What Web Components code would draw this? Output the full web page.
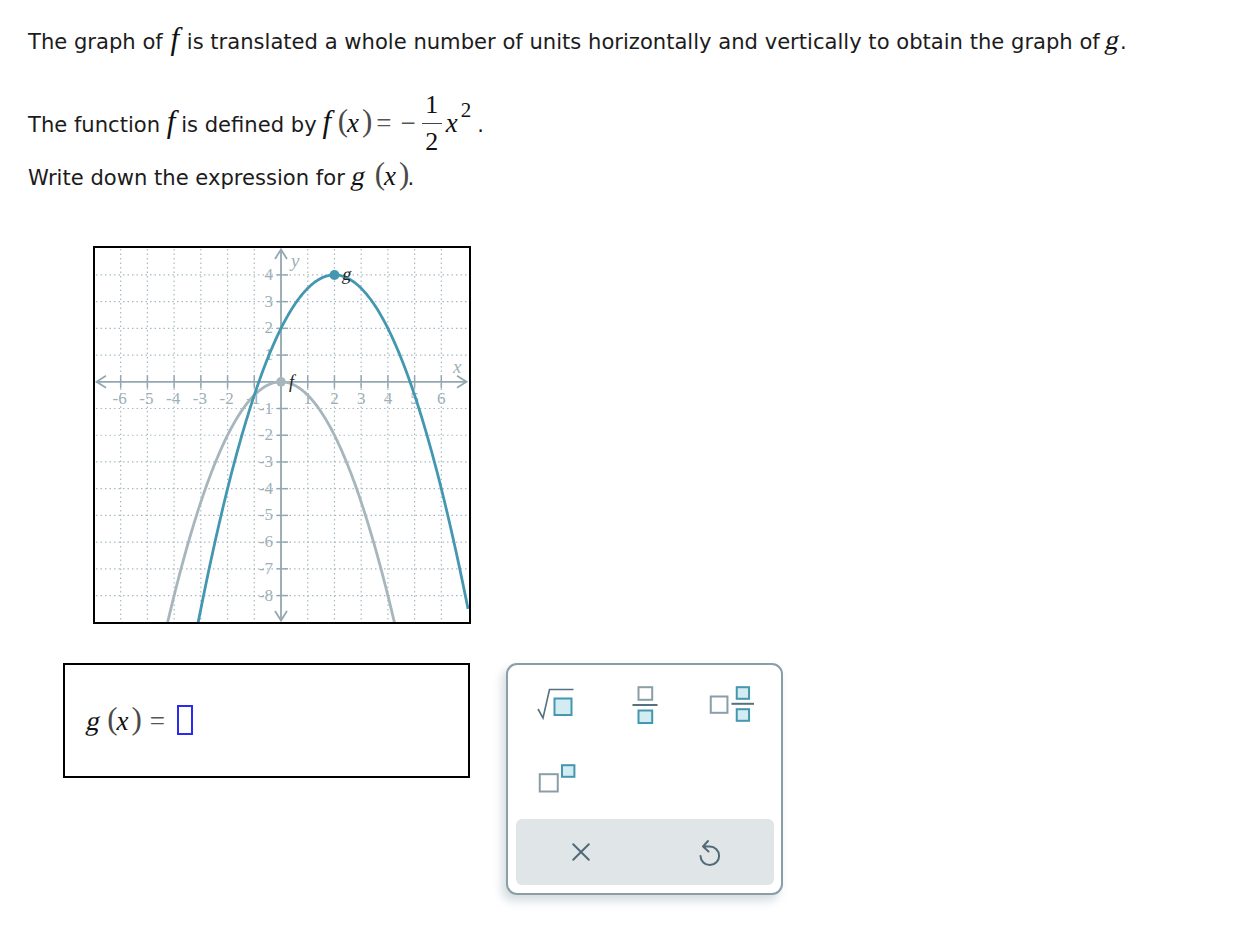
<!DOCTYPE html>
<html lang="en">
<head>
<meta charset="utf-8">
<title>Translated parabola</title>
<style>
  html, body { margin: 0; background: #fff; }
  body { font-family: "DejaVu Sans", Verdana, sans-serif; }
</style>
</head>
<body>

<template id="question-tpl">
  <style>
    :host { display: block; padding: 28px 0 0 28px; font: 21.1px/28px "DejaVu Sans", Verdana, sans-serif; color: #1c1c1c; }
    div { height: 28px; white-space: nowrap; }
    .line2 { margin-top: 54px; }
    .line3 { margin-top: 26px; }
  </style>
  <div class="line1"><slot name="first"></slot></div>
  <div class="line2"><slot name="second"></slot></div>
  <div class="line3"><slot name="third"></slot></div>
</template>

<!-- no whitespace after the style in the inline ones, it would show up as a space -->
<template id="var-tpl"><style>
    :host { font: italic 27px/0 "Liberation Serif", "Times New Roman", serif; color: #111; }
    :host([tall]) { font-size: 31px; margin: 0 1px; }
    /* the italic g of this font is single storey, the reference has the two storey one */
    :host([two-storey]) { display: inline-block; font-style: normal; transform: skewX(-12deg); }
  </style><slot></slot></template>

<template id="op-tpl"><style>
    :host { font: 27px/0 "Liberation Serif", "Times New Roman", serif; color: #555; }
  </style><slot></slot></template>

<template id="paren-tpl"><style>
    :host { margin-left: 3px; font: 27px/0 "Liberation Serif", "Times New Roman", serif; color: #111; }
    span { font-size: 31px; color: #4a4a4a; position: relative; top: -1px; }
    i { font-style: italic; margin: 0 3px 0 -1px; }
  </style><span>(</span><i><slot></slot></i><span>)</span></template>

<template id="frac-tpl">
  <style>
    :host { display: inline-flex; flex-direction: column; align-items: center; width: 20px; margin: -30px 0 -30px 6px; vertical-align: 19px; font: 26px/26px "Liberation Serif", "Times New Roman", serif; color: #111; }
    .n { padding-bottom: 4.8px; }
    .d { padding-top: 5px; border-top: 1px solid #444; width: 100%; text-align: center; }
  </style>
  <div class="n"><slot name="num"></slot></div>
  <div class="d"><slot name="den"></slot></div>
</template>

<template id="graph-tpl">
  <style>
    :host { display: block; width: 378px; height: 378px; margin: 54px 0 0 93px; box-sizing: border-box; border: 2px solid #000; background: #fff; }
    svg { display: block; }
    text { font-family: "Liberation Serif", "Times New Roman", serif; font-size: 17px; fill: #9db0b8; }
    .name { font-style: italic; font-size: 19px; }
    .curve-name { font-style: italic; fill: #222; font-size: 18px; }
  </style>
  <svg id="plot" width="374" height="374" viewBox="0 0 374 374"></svg>
</template>

<template id="answer-tpl"><style>
    :host { display: block; box-sizing: border-box; width: 407px; height: 115px; border: 2px solid #000; padding-left: 21.7px; font: 27px/113px "Liberation Serif", "Times New Roman", serif; color: #222; white-space: nowrap; }
    .eq { margin-left: 8px; color: #555; }
    .cursor { display: inline-block; vertical-align: -5.4px; margin-left: 11.5px; width: 16.5px; height: 30px; border: 2px solid #2b2bf0; box-sizing: border-box; }
  </style><slot></slot><span class="eq">=</span><span class="cursor"></span></template>

<template id="palette-tpl">
  <style>
    :host { display: block; box-sizing: border-box; width: 277px; height: 232px; border: 2px solid #8a9ea8; border-radius: 11px; background: #fff; box-shadow: -4px 6px 10px rgba(120,145,160,.32); padding: 1px 6px 0 4px; }
    .keys { display: grid; grid-template-columns: repeat(3, 88.5px); grid-auto-rows: 75px; height: 150px; }
    .bar { display: flex; margin: 3px 0 0 4px; width: 258px; height: 66px; background: #e0e5e8; border-radius: 6px; }
    .bar ::slotted(*) { flex: 1; }
  </style>
  <div class="keys"><slot></slot></div>
  <div class="bar"><slot name="actions"></slot></div>
</template>

<template id="key-tpl">
  <style>
    :host { display: flex; align-items: center; justify-content: center; }
    svg { display: block; overflow: visible; }
    .o { fill: #fff; stroke: #8a9ea8; stroke-width: 2; }
    .s { fill: #d3ecf2; stroke: #4497b0; stroke-width: 2; }
    .l { fill: none; stroke: #56717e; stroke-width: 2; }
    .t { fill: none; stroke: #56717e; stroke-width: 1.6; }
    .a { fill: none; stroke: #4f6b78; stroke-width: 2; stroke-linecap: round; stroke-linejoin: round; }
  </style>
  <svg id="icon" width="48" height="48" viewBox="0 0 48 48"></svg>
</template>

<question-text>
  <span slot="first">The graph of <math-var tall>f</math-var> is translated a whole number of units horizontally and vertically to obtain the graph of <math-var two-storey>g</math-var>.</span>
  <span slot="second">The function <math-var tall style="margin:0 -1px 0 0">f</math-var> is defined by <math-var tall style="margin:0 1px 0 -1px">f</math-var> <math-paren style="margin-left:-1px">x</math-paren><math-op style="margin-left:4px">=</math-op><math-op style="margin-left:9px">−</math-op><math-frac><span slot="num">1</span><span slot="den">2</span></math-frac><math-var style="margin-left:4px">x</math-var><math-op style="margin-left:3px;font-size:21px;vertical-align:15px;color:#111">2</math-op><span style="margin-left:6px">.</span></span>
  <span slot="third">Write down the expression for <math-var two-storey>g</math-var> <math-paren>x</math-paren><span style="margin-left:-2px">.</span></span>
</question-text>

<axis-graph></axis-graph>

<div style="display:flex;gap:36px;margin:39px 0 0 63px;padding-bottom:40px;align-items:flex-start">
  <answer-box><math-var two-storey>g</math-var><math-paren style="margin-left:7px">x</math-paren></answer-box>
  <math-palette>
    <palette-key icon="sqrt"></palette-key>
    <palette-key icon="frac"></palette-key>
    <palette-key icon="mixed"></palette-key>
    <palette-key icon="power"></palette-key>
    <palette-key slot="actions" icon="clear"></palette-key>
    <palette-key slot="actions" icon="undo"></palette-key>
  </math-palette>
</div>

<script>
  // same little boilerplate for every element: clone the template into an open root
  function tplClass(id) {
    return class extends HTMLElement {
      constructor() {
        super();
        this.attachShadow({mode: 'open'}).appendChild(document.getElementById(id).content.cloneNode(true));
      }
    };
  }

  customElements.define('question-text', tplClass('question-tpl'));
  customElements.define('math-var', tplClass('var-tpl'));
  customElements.define('math-op', tplClass('op-tpl'));
  customElements.define('math-paren', tplClass('paren-tpl'));
  customElements.define('math-frac', tplClass('frac-tpl'));
  customElements.define('answer-box', tplClass('answer-tpl'));
  customElements.define('math-palette', tplClass('palette-tpl'));

  class AxisGraph extends tplClass('graph-tpl') {
    connectedCallback() {
      // all numbers relative to the inside of the 2px border
      const ox = 186, oy = 133.8, u = 26.72;
      const X = v => ox + v * u, Y = v => oy - v * u;
      const col = '#93a8b1';
      let s = '';

      for (let i = -6; i <= 6; i++) {
        if (i) s += `<line x1="${X(i)}" x2="${X(i)}" y1="1" y2="373" stroke="#a8bac1" stroke-width="1.2" stroke-dasharray="1.5 3"/>`;
      }
      for (let i = -8; i <= 4; i++) {
        if (i) s += `<line x1="1" x2="372" y1="${Y(i)}" y2="${Y(i)}" stroke="#a8bac1" stroke-width="1.2" stroke-dasharray="1.5 3"/>`;
      }

      const axis = `stroke="${col}" stroke-width="1.8" fill="none"`;
      s += `<path d="M1 ${oy}H372M${ox} 1V373" ${axis}/>`;
      s += `<path d="M11 ${oy - 6}L1.5 ${oy}L11 ${oy + 6}M362 ${oy - 6}L371.5 ${oy}L362 ${oy + 6}M${ox - 6} 11L${ox} 1.5L${ox + 6} 11M${ox - 6} 363L${ox} 372.5L${ox + 6} 363" ${axis}/>`;

      for (let i = -6; i <= 6; i++) {
        if (!i) continue;
        s += `<line x1="${X(i)}" x2="${X(i)}" y1="${oy - 6.5}" y2="${oy + 6.5}" stroke="${col}" stroke-width="1.5"/>`;
        s += `<text x="${X(i) - (i < 0 ? 1 : 0)}" y="${oy + 22}" text-anchor="middle">${i}</text>`;
      }
      for (let i = -8; i <= 4; i++) {
        if (!i) continue;
        s += `<line x1="${ox - 4}" x2="${ox + 7}" y1="${Y(i)}" y2="${Y(i)}" stroke="${col}" stroke-width="1.5"/>`;
        s += `<text x="${ox - 8}" y="${Y(i) + 5}" text-anchor="end">${i}</text>`;
      }
      s += `<text class="name" x="${ox + 10}" y="19">y</text>`;
      s += `<text class="name" x="358" y="125">x</text>`;

      const curve = (fn, a, b, c) => {
        let d = '';
        for (let x = a; x <= b + .001; x += .05) d += (d ? 'L' : 'M') + X(x).toFixed(2) + ' ' + Y(fn(x)).toFixed(2);
        return `<path d="${d}" fill="none" stroke="${c}" stroke-width="2.8"/>`;
      };
      s += curve(x => -x * x / 2, -4.3, 4.3, '#a6b6bc');
      s += curve(x => -(x - 2) * (x - 2) / 2 + 4, -3.15, 7, '#4497b0');
      s += `<circle cx="${ox}" cy="${oy}" r="4.8" fill="#a6b6bc"/>`;
      s += `<circle cx="${X(2)}" cy="${Y(4)}" r="5" fill="#4497b0"/>`;
      s += `<text class="curve-name" x="${ox + 8}" y="${oy + 6}">f</text>`;
      s += `<text class="curve-name" style="font-style:normal" transform="translate(${X(2) + 7} ${Y(4) + 5}) skewX(-12)">g</text>`;
      this.shadowRoot.getElementById('plot').innerHTML = s;
    }
  }
  customElements.define('axis-graph', AxisGraph);

  const ICONS = {
    sqrt: '<path class="t" d="M6 29L11 38L17.5 9.5H41.5"/><rect class="s" x="22.5" y="18.5" width="17" height="16.5"/>',
    frac: '<rect class="o" x="17.5" y="7.2" width="13.7" height="12.6"/><path class="l" d="M11.5 25H36.5"/><rect class="s" x="17.5" y="30.5" width="13.7" height="12.5"/>',
    mixed: '<rect class="o" x="1.75" y="16.5" width="16.7" height="16.3"/><rect class="s" x="27.75" y="7.2" width="12.3" height="11.6"/><path class="l" d="M22.5 23.8H45"/><rect class="s" x="27.75" y="29.2" width="12.3" height="11.6"/>',
    power: '<rect class="o" x="7.75" y="19.2" width="18" height="17.3"/><rect class="s" x="30" y="10.2" width="12.4" height="11.6"/>',
    clear: '<path class="a" d="M16.2 16.2L31.8 31.8M31.8 16.2L16.2 31.8"/>',
    undo: '<path class="a" d="M17 18.5H23.8A9.3 9.3 0 1 1 14.5 28M22 13L17 18.5L22.5 23.5"/>'
  };

  class PaletteKey extends tplClass('key-tpl') {
    static get observedAttributes() { return ['icon']; }
    attributeChangedCallback(name, oldValue, newValue) {
      this.shadowRoot.getElementById('icon').innerHTML = ICONS[newValue] || '';
    }
  }
  customElements.define('palette-key', PaletteKey);
</script>
</body>
</html>
